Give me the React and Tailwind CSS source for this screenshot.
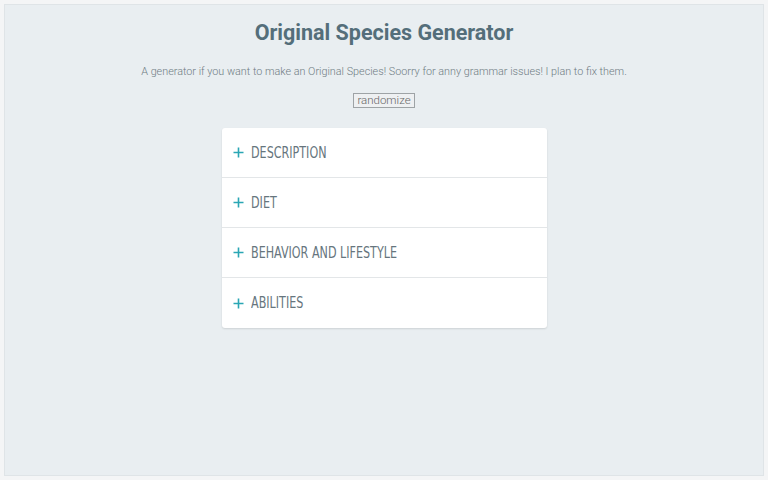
import React from "react";

const sections = ["DESCRIPTION", "DIET", "BEHAVIOR AND LIFESTYLE", "ABILITIES"];

function PlusIcon() {
  return (
    <svg width="11" height="11" viewBox="0 0 11 11" className="shrink-0">
      <path d="M5.5 0.5v10M0.5 5.5h10" stroke="#2aa6b4" strokeWidth="1.6" fill="none" />
    </svg>
  );
}

export default function App() {
  return (
    <div className="h-[480px] w-[768px] bg-[#f4f5f6] p-1">
      <div className="flex h-full flex-col items-center border border-[#dfe4e7] bg-[#e9eef1] font-['Roboto',sans-serif]">
        <h1 className="mt-[13px] text-[21.5px] font-bold leading-[30px] text-[#546e7a]">
          Original Species Generator
        </h1>
        <p className="mt-[17px] text-[10.8px] font-light leading-[14px] text-[#6f7c83]">
          A generator if you want to make an Original Species! Soorry for anny grammar issues! I plan to fix them.
        </p>
        <button className="mt-[14px] border border-[#9ea3a6] bg-[#eef0f2] px-[3px] text-[11.5px] font-light leading-[13px] text-[#666]">
          randomize
        </button>
        <div className="mt-[20px] w-[325px] rounded-[3px] bg-white shadow-[0_1px_2px_rgba(0,0,0,0.12)]">
          {sections.map((s, i) => (
            <div
              key={s}
              className={`flex h-[50px] items-center gap-[7px] pl-[11px] ${
                i < sections.length - 1 ? "border-b border-[#e3e6e8]" : ""
              }`}
            >
              <PlusIcon />
              <span className="origin-left scale-x-[0.8] whitespace-nowrap pt-[2px] font-['DejaVu_Sans_Condensed','DejaVu_Sans',sans-serif] text-[15.5px] text-[#66757d]">
                {s}
              </span>
            </div>
          ))}
        </div>
      </div>
    </div>
  );
}
